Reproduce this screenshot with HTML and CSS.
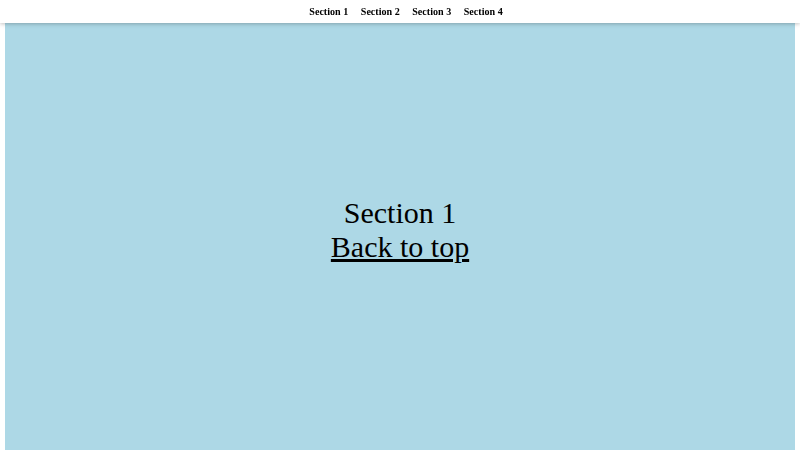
FILE: index.html
```html
<!DOCTYPE html>
<html>
<head>
<meta charset="utf-8">
<link rel="stylesheet" href="styles.css">
</head>
<body>
<nav class="topnav">
  <a class="navlink" href="#s1">Section 1</a>
  <a class="navlink" href="#s2">Section 2</a>
  <a class="navlink" href="#s3">Section 3</a>
  <a class="navlink" href="#s4">Section 4</a>
</nav>
<main class="content">
  <section class="panel" id="s1">
    <div class="panel-title">Section 1</div>
    <a class="toplink" href="#">Back to top</a>
  </section>
</main>
</body>
</html>
```
FILE: styles.css
```css
html, body {
  margin: 0;
  padding: 0;
  background: #ffffff;
  font-family: "Liberation Serif", "Times New Roman", serif;
}
.topnav {
  position: fixed;
  top: 0;
  left: 0;
  right: 0;
  height: 23px;
  padding-left: 12px;
  background: #ffffff;
  box-shadow: 0 1px 4px rgba(0, 0, 0, 0.25);
  display: flex;
  justify-content: center;
  align-items: center;
  gap: 12.5px;
  z-index: 10;
}
.navlink {
  color: #000;
  text-decoration: none;
  font-weight: bold;
  font-size: 10.1px;
  line-height: 23px;
}
.content {
  padding: 5px 5px 0;
}
.panel {
  height: 450px;
  background: #add8e6;
  display: flex;
  flex-direction: column;
  align-items: center;
  justify-content: center;
  font-size: 30px;
  color: #000;
}
.toplink {
  color: #000;
}
```
